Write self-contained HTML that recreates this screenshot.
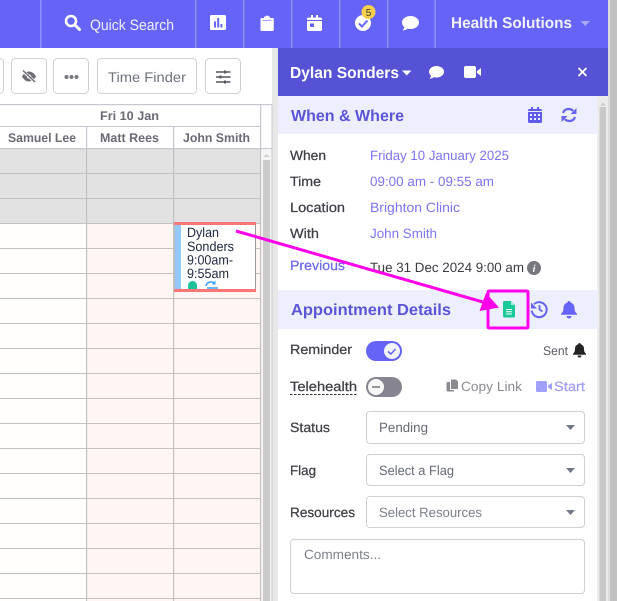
<!DOCTYPE html>
<html><head><meta charset="utf-8"><style>
html,body{margin:0;padding:0;background:#fff;width:617px;height:601px;overflow:hidden}
svg{display:block}
text{font-family:"Liberation Sans",sans-serif;font-size:13.5px;text-rendering:geometricPrecision}
.b{font-weight:bold}
.l{fill:#3d3d45;stroke:#3d3d45;stroke-width:.25px}
.v{fill:#7b74f3}
.g{fill:#6b6f7a}
.h{fill:#5a55d8;font-weight:bold;font-size:16px}
.t{fill:#6a6a76;font-weight:bold;font-size:12.5px}
</style></head><body>
<svg width="617" height="601" viewBox="0 0 617 601" xmlns="http://www.w3.org/2000/svg">
<rect width="617" height="601" fill="#fff"/>
<!-- page scrollbars -->
<rect x="272" y="48" width="6" height="553" fill="#e8e8e8"/>
<rect x="608" y="0" width="2" height="601" fill="#dcdcdc"/>
<rect x="610" y="0" width="7" height="601" fill="#c2c2c2"/>
<!-- top bar -->
<rect width="608" height="48" fill="#6664f8"/>
<g fill="#8f8efb"><rect x="40" width="1.5" height="48"/><rect x="195" width="1.5" height="48"/><rect x="243" width="1.5" height="48"/><rect x="291" width="1.5" height="48"/><rect x="339" width="1.5" height="48"/><rect x="387" width="1.5" height="48"/><rect x="434.500" width="1.5" height="48"/></g>
<circle cx="71" cy="21" r="5" fill="none" stroke="#fff" stroke-width="2.6"/><path d="M75 25l4.500 4.500" stroke="#fff" stroke-width="3" stroke-linecap="round"/>
<text x="90" y="30" textLength="84" lengthAdjust="spacingAndGlyphs" style="font-size:15px" fill="#eeeeff">Quick Search</text>
<rect x="210" y="15" width="16" height="15" rx="1.500" fill="#fff"/><path d="M214 21.500h2v6h-2zM217.200 18h2v9.500h-2zM220.400 24h2v3.500h-2z" fill="#6664f8"/>
<path d="M261.500 18H273a.8.8 0 0 1 .8.8V30a1 1 0 0 1-1 1H261.500a1 1 0 0 1-1-1V19a1 1 0 0 1 1-1z" fill="#fff"/><path d="M264 16.500h1.800a1.500 1.500 0 0 1 2.800 0h1.400v3.300h-6z" fill="#fff"/><path d="M262.500 20.500h9" stroke="#6664f8" stroke-width=".6"/>
<path d="M307 21h15v8.500a1.500 1.500 0 0 1-1.500 1.500h-12a1.500 1.500 0 0 1-1.500-1.500zM308.500 17.500H311V15h2v2.500h3V15h2v2.500h2.500A1.500 1.500 0 0 1 322 19v1H307v-1a1.500 1.500 0 0 1 1.500-1.500z" fill="#fff"/><rect x="310" y="23.500" width="4" height="3.500" fill="#6664f8"/>
<circle cx="363" cy="23" r="8" fill="#fff"/><path d="M359 23.500l3 3 5.500-6" fill="none" stroke="#6664f8" stroke-width="2"/>
<circle cx="368.500" cy="12" r="7" fill="#f6d04d"/><text x="368.500" y="16" text-anchor="middle" style="font-size:10px" fill="#333">5</text>
<path d="M410.500 16c4.700 0 8.500 2.800 8.500 6.500S415.200 29 410.500 29c-1 0-2-.1-2.800-.4-1.200.9-3 1.800-5.200 1.800 1-1 1.700-2.300 1.900-3.200-1.500-1.200-2.400-2.800-2.400-4.700 0-3.700 3.800-6.500 8.500-6.500z" fill="#fff"/>
<text x="451" y="28" textLength="121" lengthAdjust="spacingAndGlyphs" class="b" style="font-size:15.500px" fill="#f2f2ff">Health Solutions</text>
<path d="M580.500 21h9.500l-4.750 5z" fill="#a9a8fb"/>
<!-- toolbar -->
<g fill="#fff" stroke="#cfcfd2"><rect x="-6" y="58.500" width="9.500" height="35" rx="4"/><rect x="11.500" y="58.500" width="35" height="35" rx="4"/><rect x="53.500" y="58.500" width="35" height="35" rx="4"/><rect x="97.500" y="58.500" width="99" height="35" rx="4"/><rect x="205.500" y="58.500" width="35" height="35" rx="4"/></g>
<path d="M22 76.500c2-3.500 4.500-5 7-5s5 1.500 7 5c-2 3.500-4.500 5-7 5s-5-1.500-7-5z" fill="#6d6d75"/><circle cx="29" cy="76.500" r="2" fill="#fff"/><path d="M23 71l12 11" stroke="#fff" stroke-width="3"/><path d="M23 70.500l12 11.500" stroke="#6d6d75" stroke-width="1.500"/>
<g fill="#77777f"><circle cx="66.500" cy="77" r="2"/><circle cx="71.500" cy="77" r="2"/><circle cx="76.500" cy="77" r="2"/></g>
<text x="108" y="82" textLength="78" lengthAdjust="spacingAndGlyphs" style="font-size:14px" fill="#6f7480">Time Finder</text>
<path d="M216 72h14.500M216 77h14.500M216 82h14.500" stroke="#55555d" stroke-width="1.500"/><path d="M225 70.500v3M220.500 75.500v3M225 80.500v3" stroke="#55555d" stroke-width="2"/>
<!-- grid backgrounds -->
<rect x="0" y="223" width="86" height="378" fill="#fffefd"/>
<rect x="87" y="223" width="173" height="378" fill="#fff6f3"/>
<rect x="0" y="148" width="260" height="75" fill="#e2e2e2"/>
<!-- header lines -->
<g fill="#c6c8d0"><rect x="0" y="104" width="272" height="1.200"/><rect x="0" y="126" width="260" height="1"/><rect x="0" y="148" width="272" height="1.200"/><rect x="86" y="127" width="1.200" height="21"/><rect x="173" y="127" width="1.200" height="21"/><rect x="260" y="105" width="1.200" height="43"/><rect x="271.500" y="105" width="1" height="496"/></g>
<g fill="#c2c2c2"><rect x="0" y="173" width="260" height="1"/><rect x="0" y="198" width="260" height="1"/><rect x="0" y="223" width="260" height="1"/><rect x="0" y="248" width="260" height="1"/><rect x="0" y="273" width="260" height="1"/><rect x="0" y="298" width="260" height="1"/><rect x="0" y="323" width="260" height="1"/><rect x="0" y="348" width="260" height="1"/><rect x="0" y="373" width="260" height="1"/><rect x="0" y="398" width="260" height="1"/><rect x="0" y="423" width="260" height="1"/><rect x="0" y="448" width="260" height="1"/><rect x="0" y="473" width="260" height="1"/><rect x="0" y="498" width="260" height="1"/><rect x="0" y="523" width="260" height="1"/><rect x="0" y="548" width="260" height="1"/><rect x="0" y="573" width="260" height="1"/><rect x="0" y="598" width="260" height="1"/>
<rect x="86" y="149" width="1.200" height="452"/><rect x="173" y="149" width="1.200" height="452"/><rect x="260" y="149" width="1.200" height="452"/></g>
<text x="100" y="120" textLength="59" lengthAdjust="spacingAndGlyphs" class="t">Fri 10 Jan</text>
<text x="8" y="142" textLength="68" lengthAdjust="spacingAndGlyphs" class="t">Samuel Lee</text>
<text x="100" y="142" textLength="59" lengthAdjust="spacingAndGlyphs" class="t">Matt Rees</text>
<text x="183" y="142" textLength="67" lengthAdjust="spacingAndGlyphs" class="t">John Smith</text>
<!-- grid scrollbar -->
<rect x="261.500" y="149" width="10" height="452" fill="#f4f4f4"/>
<path d="M263.500 157l3-3 3 3z" fill="#cfcfcf"/>
<rect x="263" y="160" width="7" height="441" fill="#cbcbcb"/>
<!-- appointment -->
<rect x="174" y="222" width="82" height="70" fill="#fff"/>
<rect x="175" y="225" width="6" height="64" fill="#93c9fc"/>
<rect x="255" y="225" width="1" height="64" fill="#999"/><rect x="174" y="225" width="1" height="64" fill="#bbb"/>
<g fill="#222a44"><text x="187" y="237" textLength="32" lengthAdjust="spacingAndGlyphs">Dylan</text><text x="187" y="251" textLength="47" lengthAdjust="spacingAndGlyphs">Sonders</text><text x="187" y="264.500" textLength="46" lengthAdjust="spacingAndGlyphs">9:00am-</text><text x="187" y="278" textLength="42" lengthAdjust="spacingAndGlyphs">9:55am</text></g>
<path d="M188 289v-3.500a4.500 4.500 0 0 1 9 0V289z" fill="#1cc39a"/>
<path d="M206 286c.5-2.500 2.500-4 5-4 1.500 0 3 .6 4 1.500M218 288h-11" fill="none" stroke="#3d9df5" stroke-width="1.600"/><path d="M215.500 280.500v4h-3.500z" fill="#3d9df5"/>
<rect x="174" y="222" width="82" height="3" fill="#f87578"/><rect x="174" y="289" width="82" height="3" fill="#f87578"/>
<!-- panel -->
<rect x="278" y="48" width="330" height="48" fill="#5652d6"/>
<text x="290" y="78" textLength="109" lengthAdjust="spacingAndGlyphs" class="b" style="font-size:16px" fill="#fff">Dylan Sonders</text>
<path d="M402 70.500h9.500l-4.750 5z" fill="#fff"/>
<path d="M436.500 66c4.100 0 7.500 2.500 7.500 5.700s-3.400 5.800-7.500 5.800c-.9 0-1.800-.1-2.500-.4-1 .8-2.500 1.500-4.500 1.500.9-.9 1.500-2 1.600-2.800-1.300-1-2.100-2.500-2.100-4.100 0-3.200 3.400-5.700 7.500-5.700z" fill="#fff"/>
<rect x="464" y="66" width="12" height="12" rx="2" fill="#fff"/><path d="M477 71l4-3v8l-4-3z" fill="#fff"/>
<path d="M578.500 68l8 8M586.500 68l-8 8" stroke="#fff" stroke-width="1.700"/>
<rect x="278" y="96" width="319" height="38" fill="#eeeffe"/>
<rect x="597" y="96" width="11" height="505" fill="#ececec"/>
<path d="M600 105.500l3-3 3 3z" fill="#c8c8c8"/>
<rect x="599.500" y="107" width="6.500" height="494" fill="#c8c8c8"/>
<text x="291" y="121" textLength="113" lengthAdjust="spacingAndGlyphs" class="h">When &amp; Where</text>
<path d="M528 112h14v9.500a1.500 1.500 0 0 1-1.500 1.500h-11a1.500 1.500 0 0 1-1.500-1.500zM529.500 109H531v-2h2v2h4v-2h2v2h1.500a1.500 1.500 0 0 1 1.500 1.500v.5H528v-.5a1.500 1.500 0 0 1 1.500-1.500z" fill="#5f5be8"/><g fill="#eeeffe"><rect x="530" y="114" width="2" height="2"/><rect x="534" y="114" width="2" height="2"/><rect x="538" y="114" width="2" height="2"/><rect x="530" y="118" width="2" height="2"/><rect x="534" y="118" width="2" height="2"/><rect x="538" y="118" width="2" height="2"/></g>
<path d="M563 113c.8-2.500 3-4 5.700-4 1.800 0 3.300.7 4.500 1.900M575 117c-.8 2.500-3 4-5.700 4-1.800 0-3.300-.7-4.500-1.900" fill="none" stroke="#6664f0" stroke-width="2.200"/><path d="M576.500 108v6h-6zM561.500 122v-6h6z" fill="#6664f0"/>
<text x="290" y="160" textLength="36" lengthAdjust="spacingAndGlyphs" class="l">When</text>
<text x="290" y="186" textLength="31" lengthAdjust="spacingAndGlyphs" class="l">Time</text>
<text x="290" y="212" textLength="55" lengthAdjust="spacingAndGlyphs" class="l">Location</text>
<text x="290" y="238" textLength="29" lengthAdjust="spacingAndGlyphs" class="l">With</text>
<text x="370" y="160" textLength="139" lengthAdjust="spacingAndGlyphs" class="v">Friday 10 January 2025</text>
<text x="370" y="186" textLength="124" lengthAdjust="spacingAndGlyphs" class="v">09:00 am - 09:55 am</text>
<text x="370" y="212" textLength="90" lengthAdjust="spacingAndGlyphs" class="v">Brighton Clinic</text>
<text x="370" y="238" textLength="67" lengthAdjust="spacingAndGlyphs" class="v">John Smith</text>
<text x="290" y="270" textLength="55" lengthAdjust="spacingAndGlyphs" fill="#6c68ee" stroke="#6c68ee" stroke-width=".25">Previous</text>
<text x="370" y="272" textLength="154" lengthAdjust="spacingAndGlyphs" fill="#3a3a42">Tue 31 Dec 2024 9:00 am</text>
<circle cx="534" cy="268" r="7" fill="#77777f"/><text x="534" y="272" text-anchor="middle" class="b" style="font-size:10px;font-style:italic" fill="#fff">i</text>
<!-- appt details -->
<rect x="278" y="290" width="319" height="39" fill="#eeeffe"/>
<text x="291" y="315" textLength="160" lengthAdjust="spacingAndGlyphs" class="h">Appointment Details</text>
<path d="M504.500 301H511l4 4v11a1.500 1.500 0 0 1-1.500 1.500h-9A1.500 1.500 0 0 1 503 316v-13.500a1.500 1.500 0 0 1 1.500-1.500z" fill="#1cc99a"/><path d="M511 301v4h4" fill="#a8ecd8"/><path d="M506 309.500h6M506 311.800h6M506 314h6" stroke="#fff" stroke-width="1"/>
<path d="M534 304.200a7.500 7.500 0 1 1-2.300 6.300" fill="none" stroke="#6664f0" stroke-width="2"/><path d="M531 302.500v6h6z" fill="#6664f0"/><path d="M539.500 305v4.500l3 2" fill="none" stroke="#6664f0" stroke-width="1.800"/>
<path d="M569 301a1.500 1.500 0 0 1 1.500 1.500c2.500.7 4 2.800 4 5.300 0 3.500 1 4.500 2.500 6v1H561v-1c1.500-1.500 2.500-2.500 2.500-6 0-2.500 1.500-4.600 4-5.300A1.500 1.500 0 0 1 569 301zM566.500 316h5a2.500 2.500 0 0 1-5 0z" fill="#6664f8"/>
<!-- arrow -->
<path d="M236 231L488 303.500" stroke="#ff00ea" stroke-width="3"/>
<path d="M499 307.500L479.500 311L486 293z" fill="#ff00ea"/>
<rect x="488" y="291" width="40" height="37" rx="1" fill="none" stroke="#ff00ea" stroke-width="3"/>
<!-- form -->
<text x="290" y="354" textLength="62" lengthAdjust="spacingAndGlyphs" class="l">Reminder</text>
<rect x="366" y="341" width="36" height="20" rx="10" fill="#6664f8"/><circle cx="392" cy="351" r="8" fill="#f4f4ff"/><path d="M388 351.500l3 2.500 4.500-5" fill="none" stroke="#6664f8" stroke-width="1.500"/>
<text x="543" y="355" textLength="25" lengthAdjust="spacingAndGlyphs" style="font-size:12.500px" fill="#5a5a62">Sent</text>
<path d="M579.500 343a1.200 1.200 0 0 1 1.200 1.300c2.100.6 3.300 2.400 3.300 4.400 0 3 .8 3.800 2 5v1h-13v-1c1.200-1.200 2-2 2-5 0-2 1.200-3.800 3.300-4.400a1.200 1.200 0 0 1 1.200-1.300zM577.500 355.500h4a2 2 0 0 1-4 0z" fill="#222"/>
<text x="290" y="391" textLength="67" lengthAdjust="spacingAndGlyphs" class="l">Telehealth</text>
<path d="M290 394.500h67" stroke="#333" stroke-dasharray="2.500 1.500"/>
<rect x="366" y="377" width="36" height="20" rx="10" fill="#858490"/><circle cx="376" cy="387" r="8" fill="#f8f8f8"/><path d="M372 387h8" stroke="#777" stroke-width="1.500"/>
<path d="M451 379.500h5l2 2V388a1 1 0 0 1-1 1h-6zM447.500 382H450v8h4v1.500h-6.500a1 1 0 0 1-1-1V383a1 1 0 0 1 1-1z" fill="#8a8a90"/>
<text x="461" y="391" textLength="61" lengthAdjust="spacingAndGlyphs" fill="#8a8a90">Copy Link</text>
<rect x="536" y="381" width="11" height="11" rx="1.500" fill="#a09ffa"/><path d="M548 385.500l4-2.500v7l-4-2.500z" fill="#a09ffa"/>
<text x="554" y="391" textLength="31" lengthAdjust="spacingAndGlyphs" fill="#a09ffa" stroke="#a09ffa" stroke-width=".25">Start</text>
<text x="290" y="432" textLength="40" lengthAdjust="spacingAndGlyphs" class="l">Status</text>
<text x="290" y="475" textLength="26" lengthAdjust="spacingAndGlyphs" class="l">Flag</text>
<text x="290" y="517" textLength="65" lengthAdjust="spacingAndGlyphs" class="l">Resources</text>
<g fill="#fff" stroke="#cfd0d4"><rect x="366.500" y="411.500" width="218" height="32" rx="3.500"/><rect x="366.500" y="454.500" width="218" height="31" rx="3.500"/><rect x="366.500" y="496.500" width="218" height="31" rx="3.500"/><rect x="290.500" y="539.500" width="294" height="54" rx="3.500"/></g>
<text x="379" y="432" textLength="49" lengthAdjust="spacingAndGlyphs" fill="#666b76">Pending</text>
<text x="379" y="475" textLength="75" lengthAdjust="spacingAndGlyphs" fill="#666b76">Select a Flag</text>
<text x="379" y="517" textLength="103" lengthAdjust="spacingAndGlyphs" fill="#7d818a">Select Resources</text>
<text x="304" y="559" textLength="77" lengthAdjust="spacingAndGlyphs" fill="#7d818a">Comments...</text>
<g fill="#727888"><path d="M566 425h9l-4.500 5z"/><path d="M566 468h9l-4.500 5z"/><path d="M566 510h9l-4.500 5z"/></g>
</svg>
</body></html>
